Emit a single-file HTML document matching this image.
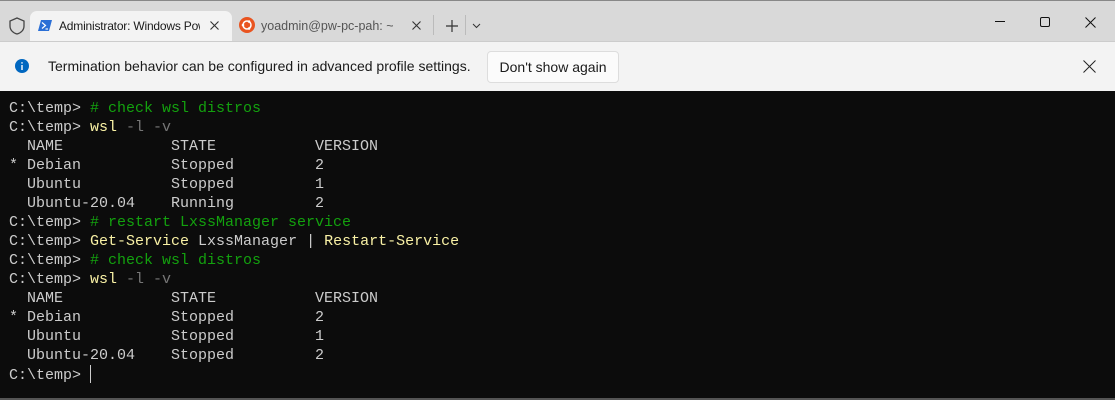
<!DOCTYPE html>
<html><head><meta charset="utf-8"><style>
*{margin:0;padding:0;box-sizing:border-box}
body{width:1115px;height:400px;overflow:hidden;background:#0c0c0c;font-family:"Liberation Sans",sans-serif;position:relative}
.tabbar{position:absolute;left:0;top:0;width:1115px;height:41px;background:#d9d9d9;border-top:1px solid #888}
.tab{position:absolute;top:10px;left:30px;width:202px;height:32px;background:#f3f3f3;border-radius:7px 7px 0 0}
.t{position:absolute;font-size:12.5px;color:#1a1a1a;white-space:nowrap}
.info{position:absolute;left:0;top:41px;width:1115px;height:50px;background:#f3f3f3;border-top:1px solid #ccc}
.btn{position:absolute;left:487px;top:9px;width:132px;height:32px;background:#fbfbfb;border:1px solid #ddd;border-radius:4px;font-size:14px;color:#1a1a1a;text-align:center;line-height:30px}
.term{position:absolute;left:9px;top:99px;font-family:"Liberation Mono",monospace;font-size:15px;line-height:19px;color:#cccccc;white-space:pre}
.g{color:#13a10e}.y{color:#f9f1a5}.d{color:#767676}
.cur{display:inline-block;width:1px;height:18px;background:#ccc;vertical-align:-4px}
</style></head><body>
<div class="tabbar">
<svg style="position:absolute;left:9px;top:16px" width="16" height="18" viewBox="0 0 16 18"><path d="M8 1 L15 4 V9 C15 13 12 16 8 17 C4 16 1 13 1 9 V4 Z" fill="none" stroke="#444" stroke-width="1.3"/></svg>
<div class="tab"></div>
<svg style="position:absolute;left:38px;top:19px" width="14" height="11"><polygon points="3,0 14,0 11,11 0,11" fill="#2a6fd6"/><path d="M4 2.5 L7.5 5.5 L4 8.5" stroke="#fff" stroke-width="1.2" fill="none"/><path d="M7.5 9 H10" stroke="#fff" stroke-width="1.1"/></svg>
<div class="t" style="left:59px;top:18px;font-size:12px;letter-spacing:-0.2px;width:141px;overflow:hidden">Administrator: Windows Powe</div>
<svg style="position:absolute;left:210px;top:20px" width="9" height="9"><path d="M0.5 0.5L8.5 8.5M8.5 0.5L0.5 8.5" stroke="#333" stroke-width="1.1"/></svg>
<svg style="position:absolute;left:239px;top:16px" width="16" height="16"><circle cx="8" cy="8" r="8" fill="#e95420"/><circle cx="8" cy="8" r="4" fill="none" stroke="#fff" stroke-width="1.5"/><circle cx="4" cy="8" r="1.3" fill="#fff"/><circle cx="10" cy="4.5" r="1.3" fill="#fff"/><circle cx="10" cy="11.5" r="1.3" fill="#fff"/></svg>
<div class="t" style="left:261px;top:18px;color:#555">yoadmin@pw-pc-pah: ~</div>
<svg style="position:absolute;left:412px;top:20px" width="9" height="9"><path d="M0.5 0.5L8.5 8.5M8.5 0.5L0.5 8.5" stroke="#333" stroke-width="1.1"/></svg>
<div style="position:absolute;left:433px;top:14px;width:1px;height:20px;background:#bbb"></div>
<svg style="position:absolute;left:446px;top:19px" width="12" height="12"><path d="M6 0V12M0 6H12" stroke="#333" stroke-width="1.2"/></svg>
<div style="position:absolute;left:465px;top:14px;width:1px;height:20px;background:#bbb"></div>
<svg style="position:absolute;left:472px;top:22px" width="9" height="6"><path d="M1 1L4.5 4.5L8 1" stroke="#333" fill="none"/></svg>
<div style="position:absolute;left:995px;top:20px;width:10px;height:1px;background:#111"></div>
<div style="position:absolute;left:1040px;top:16px;width:10px;height:10px;border:1px solid #111;border-radius:2px"></div>
<svg style="position:absolute;left:1085px;top:16px" width="11" height="11"><path d="M0.5 0.5L10.5 10.5M10.5 0.5L0.5 10.5" stroke="#111"/></svg>
</div>
<div class="info">
<svg style="position:absolute;left:15px;top:17px" width="14" height="14"><circle cx="7" cy="7" r="7" fill="#0067c0"/><rect x="6.3" y="6" width="1.4" height="5" fill="#fff"/><rect x="6.3" y="3.2" width="1.4" height="1.4" fill="#fff"/></svg>
<div class="t" style="left:48px;top:16px;font-size:14px">Termination behavior can be configured in advanced profile settings.</div>
<div class="btn">Don't show again</div>
<svg style="position:absolute;left:1083px;top:18px" width="13" height="13"><path d="M0.5 0.5L12.5 12.5M12.5 0.5L0.5 12.5" stroke="#222"/></svg>
</div>
<div class="term">C:\temp> <span class="g"># check wsl distros</span>
C:\temp> <span class="y">wsl</span> <span class="d">-l -v</span>
  NAME            STATE           VERSION
* Debian          Stopped         2
  Ubuntu          Stopped         1
  Ubuntu-20.04    Running         2
C:\temp> <span class="g"># restart LxssManager service</span>
C:\temp> <span class="y">Get-Service</span> LxssManager | <span class="y">Restart-Service</span>
C:\temp> <span class="g"># check wsl distros</span>
C:\temp> <span class="y">wsl</span> <span class="d">-l -v</span>
  NAME            STATE           VERSION
* Debian          Stopped         2
  Ubuntu          Stopped         1
  Ubuntu-20.04    Stopped         2
C:\temp> <span class="cur"></span></div>
<div style="position:absolute;left:0;top:398px;width:1115px;height:2px;background:#555"></div>
</body></html>
